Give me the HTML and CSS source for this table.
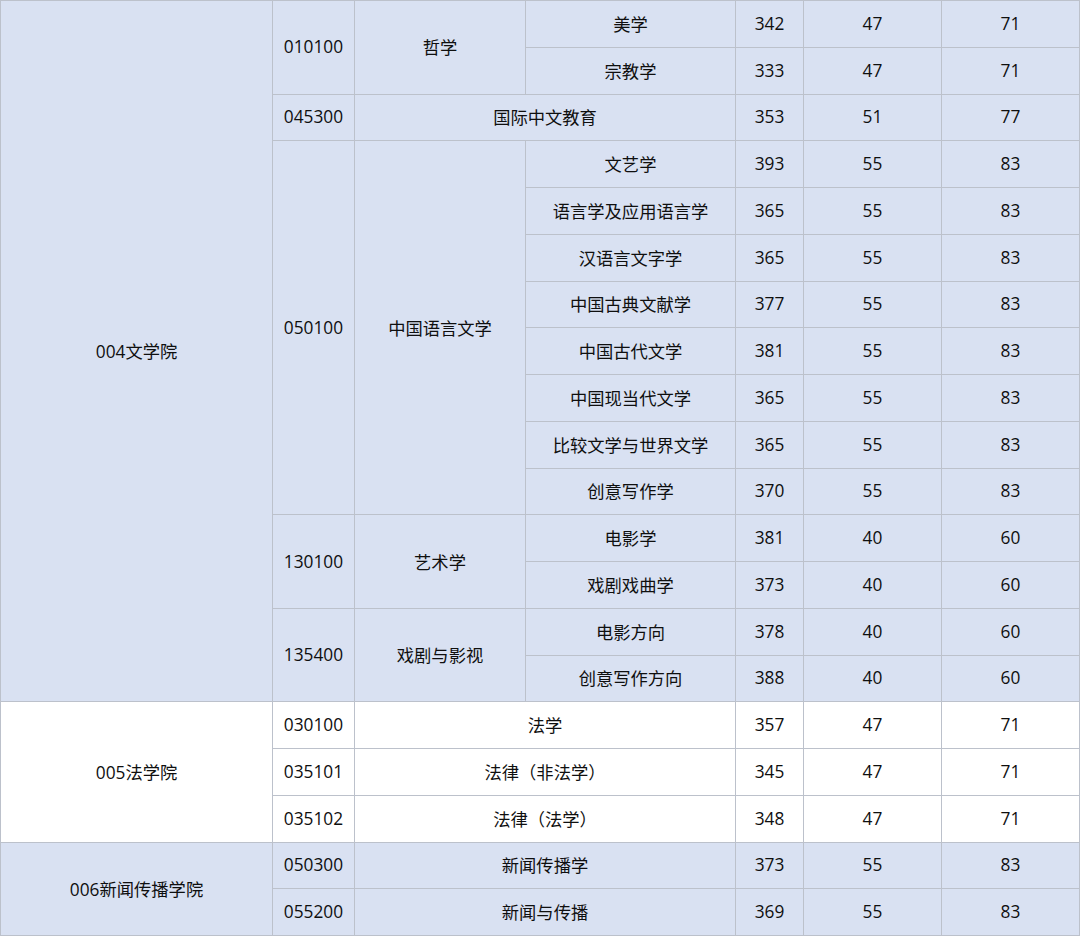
FILE: index.html
```html
<!DOCTYPE html>
<html lang="zh">
<head>
<meta charset="utf-8">
<link rel="stylesheet" href="styles.css">
</head>
<body>
<div class="sheet">
  <div class="c b r15">004文学院</div>
  <div class="c b r2">010100</div>
  <div class="c b r2">哲学</div>
  <div class="c b">美学</div><div class="c b">342</div><div class="c b">47</div><div class="c b">71</div>
  <div class="c b">宗教学</div><div class="c b">333</div><div class="c b">47</div><div class="c b">71</div>
  <div class="c b">045300</div><div class="c b s2">国际中文教育</div><div class="c b">353</div><div class="c b">51</div><div class="c b">77</div>
  <div class="c b r8">050100</div>
  <div class="c b r8">中国语言文学</div>
  <div class="c b">文艺学</div><div class="c b">393</div><div class="c b">55</div><div class="c b">83</div>
  <div class="c b">语言学及应用语言学</div><div class="c b">365</div><div class="c b">55</div><div class="c b">83</div>
  <div class="c b">汉语言文字学</div><div class="c b">365</div><div class="c b">55</div><div class="c b">83</div>
  <div class="c b">中国古典文献学</div><div class="c b">377</div><div class="c b">55</div><div class="c b">83</div>
  <div class="c b">中国古代文学</div><div class="c b">381</div><div class="c b">55</div><div class="c b">83</div>
  <div class="c b">中国现当代文学</div><div class="c b">365</div><div class="c b">55</div><div class="c b">83</div>
  <div class="c b">比较文学与世界文学</div><div class="c b">365</div><div class="c b">55</div><div class="c b">83</div>
  <div class="c b">创意写作学</div><div class="c b">370</div><div class="c b">55</div><div class="c b">83</div>
  <div class="c b r2">130100</div>
  <div class="c b r2">艺术学</div>
  <div class="c b">电影学</div><div class="c b">381</div><div class="c b">40</div><div class="c b">60</div>
  <div class="c b">戏剧戏曲学</div><div class="c b">373</div><div class="c b">40</div><div class="c b">60</div>
  <div class="c b r2">135400</div>
  <div class="c b r2">戏剧与影视</div>
  <div class="c b">电影方向</div><div class="c b">378</div><div class="c b">40</div><div class="c b">60</div>
  <div class="c b">创意写作方向</div><div class="c b">388</div><div class="c b">40</div><div class="c b">60</div>

  <div class="c w r3">005法学院</div>
  <div class="c w">030100</div><div class="c w s2">法学</div><div class="c w">357</div><div class="c w">47</div><div class="c w">71</div>
  <div class="c w">035101</div><div class="c w s2">法律（非法学）</div><div class="c w">345</div><div class="c w">47</div><div class="c w">71</div>
  <div class="c w">035102</div><div class="c w s2">法律（法学）</div><div class="c w">348</div><div class="c w">47</div><div class="c w">71</div>

  <div class="c b r2">006新闻传播学院</div>
  <div class="c b">050300</div><div class="c b s2">新闻传播学</div><div class="c b">373</div><div class="c b">55</div><div class="c b">83</div>
  <div class="c b">055200</div><div class="c b s2">新闻与传播</div><div class="c b">369</div><div class="c b">55</div><div class="c b">83</div>
</div>
</body>
</html>
```

FILE: styles.css
```css
html, body {
  margin: 0;
  padding: 0;
  background: #ffffff;
}
.sheet {
  width: 1080px;
  height: 936px;
  box-sizing: border-box;
  padding: 1px 1px 1px 1px;
  background: #bcc1cb;
  display: grid;
  grid-template-columns: 271px 81px 170px 209px 67px 137px 137px;
  grid-template-rows: repeat(20, 1fr);
  gap: 1px;
  font-family: "Open Sans", "Noto Sans CJK SC", sans-serif;
  font-size: 17.3px;
  color: #0f0f0f;
}
.c {
  display: flex;
  align-items: center;
  justify-content: center;
  white-space: nowrap;
  padding-bottom: 1px;
}
.b { background: #d9e1f2; }
.w { background: #ffffff; }
.r2 { grid-row: span 2; }
.r3 { grid-row: span 3; }
.r8 { grid-row: span 8; }
.r15 { grid-row: span 15; }
.s2 { grid-column: span 2; }
```
